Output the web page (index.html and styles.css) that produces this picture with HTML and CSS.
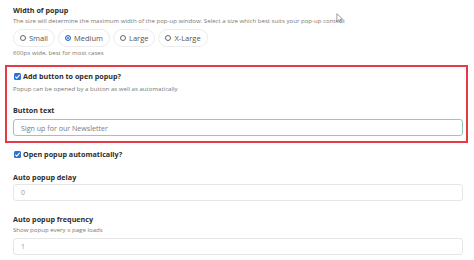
FILE: index.html
```html
<!DOCTYPE html>
<html>
<head>
<meta charset="utf-8">
<link rel="stylesheet" href="styles.css">
</head>
<body>
<div class="page">
  <div class="field">
    <div class="label">Width of popup</div>
    <div class="help desc">The size will determine the maximum width of the pop-up window. Select a size which best suits your pop-up content</div>
    <div class="radios">
      <label class="pill"><span class="radio"></span>Small</label>
      <label class="pill"><span class="radio on"></span>Medium</label>
      <label class="pill"><span class="radio"></span>Large</label>
      <label class="pill"><span class="radio"></span>X-Large</label>
    </div>
    <div class="help hint">600px wide, best for most cases</div>
  </div>

  <div class="highlight">
    <div class="check"><span class="box"><svg viewBox="0 0 8 8" width="7" height="7"><path d="M1.5 4.2 L3.2 5.8 L6.5 2.2" fill="none" stroke="#fff" stroke-width="1.3"/></svg></span>Add button to open popup?</div>
    <div class="help sub">Popup can be opened by a button as well as automatically</div>
    <div class="label bt">Button text</div>
    <div class="input teal">Sign up for our Newsletter</div>
  </div>

  <div class="check auto"><span class="box"><svg viewBox="0 0 8 8" width="7" height="7"><path d="M1.5 4.2 L3.2 5.8 L6.5 2.2" fill="none" stroke="#fff" stroke-width="1.3"/></svg></span>Open popup automatically?</div>

  <div class="label delay">Auto popup delay</div>
  <div class="input plain">0</div>

  <div class="label freq">Auto popup frequency</div>
  <div class="help">Show popup every x page loads</div>
  <div class="input plain last">1</div>

  <svg class="cursor" viewBox="0 0 10 14" width="8" height="11"><path d="M1 1 L1 11 L3.5 8.5 L5.5 12.5 L7 11.8 L5 8 L8.5 8 Z" fill="#fff" stroke="#666" stroke-width="0.8"/></svg>
</div>
</body>
</html>
```
FILE: styles.css
```css
* { box-sizing: border-box; }
html, body { margin: 0; padding: 0; background: #fff; }
body { font-family: "Open Sans", "Noto Sans", sans-serif; color: #333; width: 474px; height: 260px; overflow: hidden; }
.page { position: relative; padding: 4px 0 0 13px; }
.label { font-size: 7.2px; font-weight: 700; color: #2d2d2d; line-height: 12px; }
.help { font-size: 6.1px; color: #777; line-height: 10px; }
.radios { display: flex; gap: 3px; margin-top: 3px; height: 18px; }
.pill { display: flex; align-items: center; gap: 3px; padding: 0 6px 0 6px; border: 1px solid #ececec; border-radius: 9px; font-size: 7.5px; color: #555; }
.radio { width: 6px; height: 6px; border-radius: 50%; border: 0.8px solid #666; background: #fff; }
.radio.on { border: 1.5px solid #2f6fd6; background: #2f6fd6; box-shadow: inset 0 0 0 1px #fff; }
.hint { margin-top: 1px; }
.highlight { margin: 7px 0 0 -8px; width: 463px; height: 78px; border: 2px solid #e53945; padding: 3px 6px 0 6px; }
.check { display: flex; align-items: center; gap: 2px; font-size: 7.2px; font-weight: 700; color: #2d2d2d; line-height: 12px; }
.box { width: 7px; height: 7px; border-radius: 1.5px; background: #2f6fd6; display: flex; align-items: center; justify-content: center; margin-left: 1px; }
.sub { margin-top: 2px; }
.bt { margin-top: 10px; }
.input { height: 17px; width: 450px; border-radius: 3px; font-size: 7.1px; color: #888; display: flex; align-items: center; padding-left: 7px; }
.input.teal { border: 1.3px solid #92c9bd; margin-top: 3px; color: #7a7a7a; }
.input.plain { border: 1px solid #e6e6e6; padding-left: 7px; color: #999; font-size: 7px; }
.check.auto { margin-top: 5px; }
.delay { margin-top: 11px; margin-bottom: 1px; }
.freq { margin-top: 12px; }
.last { margin-top: 3px; }
.cursor { position: absolute; left: 336px; top: 13px; }
```
